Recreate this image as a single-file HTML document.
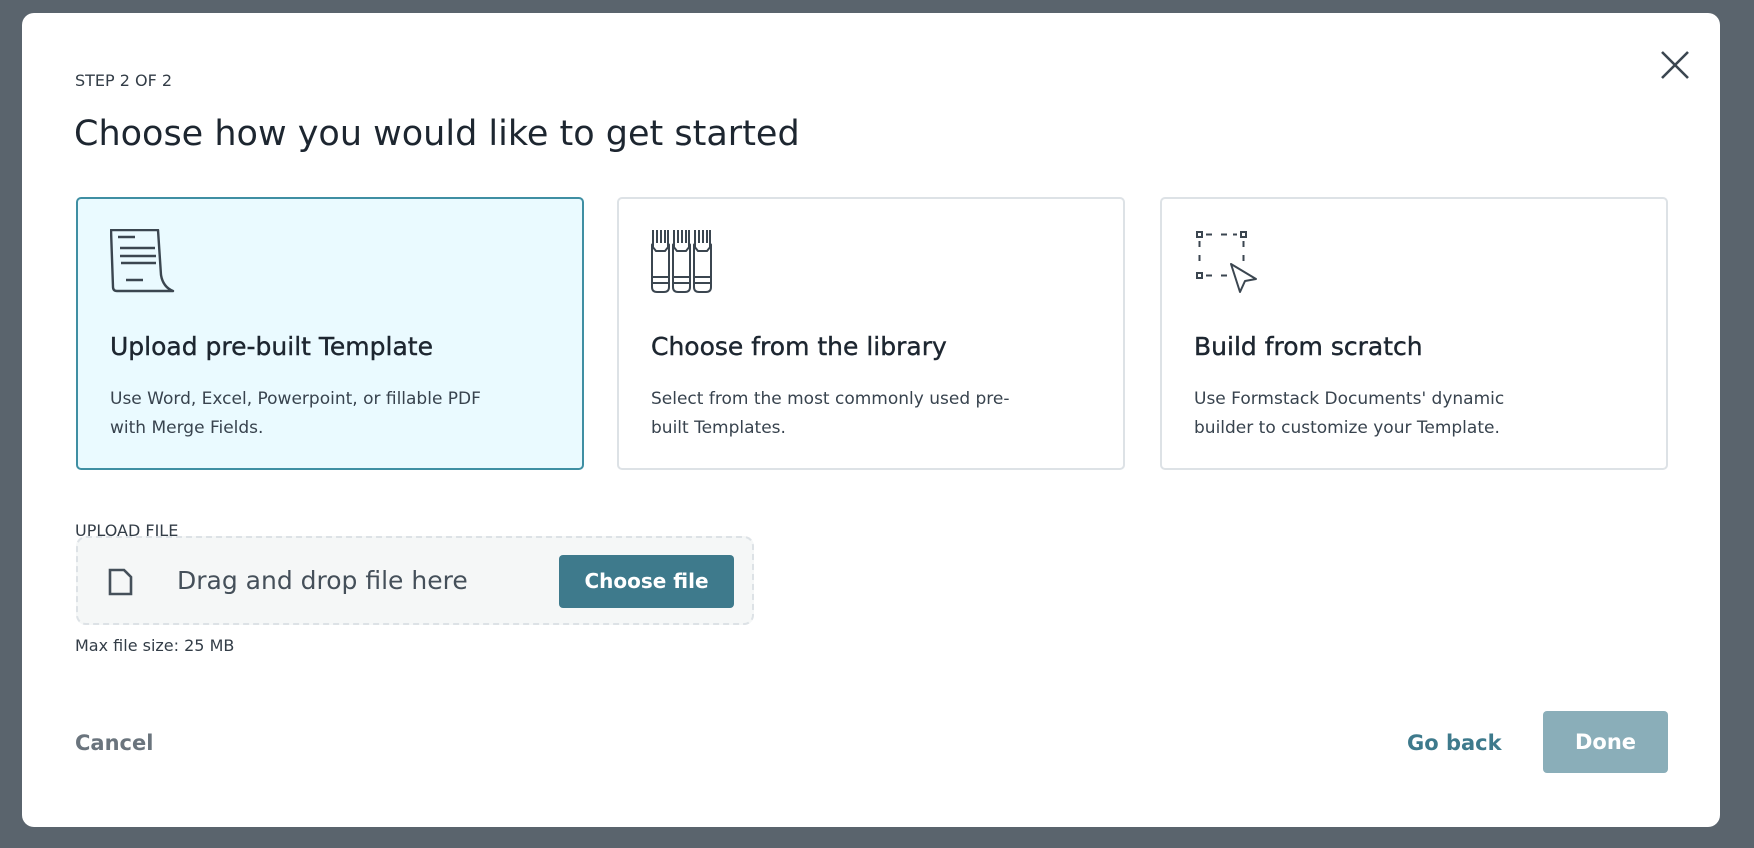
<!DOCTYPE html>
<html><head><meta charset="utf-8"><style>
*{box-sizing:border-box;margin:0;padding:0}
body{width:1754px;height:848px;background:#5a646d;font-family:"DejaVu Sans","Liberation Sans",sans-serif;position:relative;overflow:hidden}
.modal{position:absolute;left:22px;top:13px;width:1698px;height:814px;background:#fff;border-radius:12px}
.abs{position:absolute}
.step{left:53px;top:58px;font-size:16px;color:#333d47}
h1{position:absolute;left:52px;top:101px;font-size:35px;font-weight:normal;color:#1d2630}
.card{position:absolute;top:184px;width:508px;height:273px;border:2px solid #dde2e6;border-radius:5px;background:#fff}
.card.sel{background:#eafaff;border-color:#3f8fa3}
.card h2{position:absolute;left:32px;top:133px;font-size:25px;font-weight:normal;color:#1d2630;-webkit-text-stroke:0.4px #1d2630}
.card p{position:absolute;left:32px;top:186px;font-size:17px;line-height:29px;color:#38434e;width:460px;white-space:nowrap}
.card svg{position:absolute;left:32px;top:30px}
.lbl{left:53px;top:508px;font-size:16px;color:#333d47}
.drop{left:54px;top:523px;width:678px;height:89px;border:2px dashed #dde2e6;border-radius:10px;background:#f5f7f7}
.drop .t{position:absolute;left:99px;top:28px;font-size:25px;color:#45505a}
.btn{position:absolute;left:481px;top:17px;width:175px;height:53px;background:#3e7a8c;border-radius:4px;color:#fff;font-weight:bold;font-size:20px;text-align:center;line-height:53px}
.max{left:53px;top:623px;font-size:16px;color:#333d47}
.cancel{left:53px;top:718px;font-size:21px;font-weight:bold;color:#6a747d}
.back{left:1385px;top:718px;font-size:21px;font-weight:bold;color:#3e7a8c}
.done{left:1521px;top:698px;width:125px;height:62px;background:#8aaeb9;border-radius:4px;color:#fff;font-weight:bold;font-size:21px;text-align:center;line-height:62px}
</style></head><body>
<div class="modal">
<svg class="abs" style="left:1638px;top:37px" width="30" height="30" viewBox="0 0 30 30"><path d="M2 2L28 28M28 2L2 28" stroke="#3b4650" stroke-width="2.6"/></svg>
<div class="abs step">STEP 2 OF 2</div>
<h1>Choose how you would like to get started</h1>
<div class="card sel" style="left:54px">
<svg width="68" height="68" viewBox="0 0 68 68" fill="none" stroke="#3b4650" stroke-width="2.4" stroke-linejoin="round"><path d="M1 1H48L51 46Q53 58 63 62H7Q3 62 3 58Z"/><path d="M8 8H25M10 19H45M10 27H46M11 34H46M16 51H33"/></svg>
<h2>Upload pre-built Template</h2>
<p>Use Word, Excel, Powerpoint, or fillable PDF<br>with Merge Fields.</p>
</div>
<div class="card" style="left:595px">
<svg width="68" height="68" viewBox="0 0 68 68" fill="none" stroke="#3b4650" stroke-width="2"><g id="b"><path d="M2 1V18M6 1V14M10 1V14M14 1V14M17 1V18"/><path d="M1 17L5 22H14L18 17V58Q18 63 13 63H6Q1 63 1 58Z"/><path d="M1 48H18M1 54H18"/></g><use href="#b" x="21"/><use href="#b" x="42"/></svg>
<h2>Choose from the library</h2>
<p>Select from the most commonly used pre-<br>built Templates.</p>
</div>
<div class="card" style="left:1138px">
<svg width="68" height="68" viewBox="0 0 68 68" fill="none" stroke="#3b4650" stroke-width="2"><rect x="3" y="3" width="5" height="5"/><rect x="47" y="3" width="5" height="5"/><rect x="3" y="44" width="5" height="5"/><path d="M12 5.5H18M27 5.5H33M39 5.5H43M5.5 12V18M5.5 26V32M49.5 12V18M49.5 26V32M12 46.5H18M27 46.5H33"/><path d="M37 35L62 50L51 52L46 63Z" stroke-linejoin="round"/></svg>
<h2>Build from scratch</h2>
<p>Use Formstack Documents' dynamic<br>builder to customize your Template.</p>
</div>
<div class="abs lbl">UPLOAD FILE</div>
<div class="abs drop">
<svg class="abs" style="left:30px;top:30px" width="26" height="28" viewBox="0 0 26 28" fill="none" stroke="#45505a" stroke-width="2.6"><path d="M2 2H16L23 9V26H2Z"/></svg>
<div class="t">Drag and drop file here</div>
<div class="btn">Choose file</div>
</div>
<div class="abs max">Max file size: 25 MB</div>
<div class="abs cancel">Cancel</div>
<div class="abs back">Go back</div>
<div class="abs done">Done</div>
</div>
</body></html>
